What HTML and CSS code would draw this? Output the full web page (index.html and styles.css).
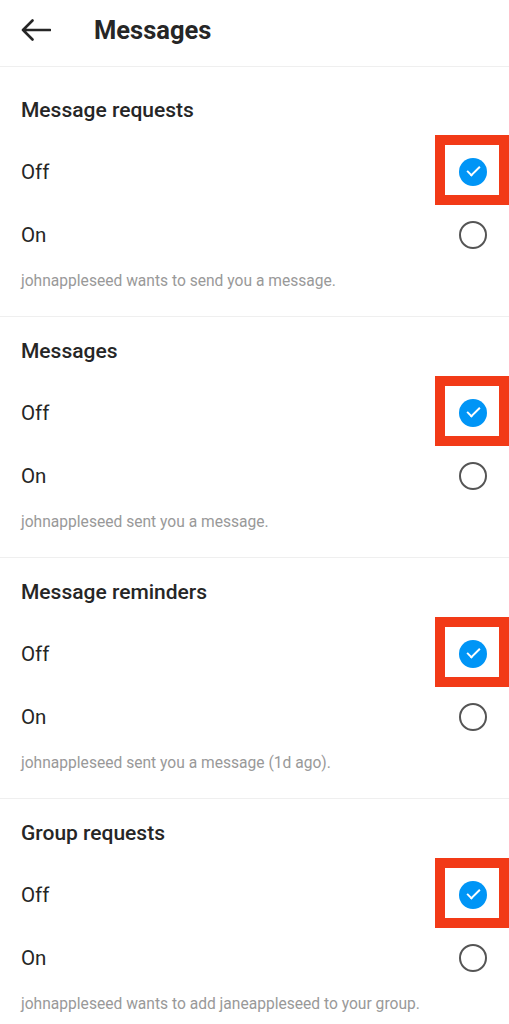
FILE: index.html
```html
<!DOCTYPE html>
<html lang="en">
<head>
    <meta charset="UTF-8">
    <meta name="viewport" content="width=device-width, initial-scale=1.0">
    <title>Messages</title>
    <link rel="stylesheet" href="styles.css">
</head>
<body>
    <div class="header">
        <svg class="back" width="30" height="22" viewBox="0 0 30 22">
            <path d="M29 11H2M11.5 1.5L2 11l9.5 9.5" fill="none" stroke="#262626" stroke-width="2.6" stroke-linecap="round" stroke-linejoin="round"/>
        </svg>
        <h1>Messages</h1>
    </div>

    <div class="section first">
        <h2>Message requests</h2>
        <div class="option">
            <span>Off</span>
            <span class="radio checked marked"></span>
        </div>
        <div class="option">
            <span>On</span>
            <span class="radio"></span>
        </div>
        <p class="note">johnappleseed wants to send you a message.</p>
    </div>

    <div class="section">
        <h2>Messages</h2>
        <div class="option">
            <span>Off</span>
            <span class="radio checked marked"></span>
        </div>
        <div class="option">
            <span>On</span>
            <span class="radio"></span>
        </div>
        <p class="note">johnappleseed sent you a message.</p>
    </div>

    <div class="section">
        <h2>Message reminders</h2>
        <div class="option">
            <span>Off</span>
            <span class="radio checked marked"></span>
        </div>
        <div class="option">
            <span>On</span>
            <span class="radio"></span>
        </div>
        <p class="note">johnappleseed sent you a message (1d ago).</p>
    </div>

    <div class="section">
        <h2>Group requests</h2>
        <div class="option">
            <span>Off</span>
            <span class="radio checked marked"></span>
        </div>
        <div class="option">
            <span>On</span>
            <span class="radio"></span>
        </div>
        <p class="note">johnappleseed wants to add janeappleseed to your group.</p>
    </div>
</body>
</html>
```

FILE: styles.css
```css
body {
    font-family: Roboto, "Noto Sans", sans-serif;
    margin: 0;
    background-color: #fff;
    color: #262626;
}
.header {
    height: 66px;
    display: flex;
    align-items: center;
    padding-left: 21px;
    border-bottom: 1px solid #efefef;
    box-sizing: content-box;
}
.header .back {
    display: block;
    margin-top: -6px;
}
.header h1 {
    margin: -6px 0 0 43px;
    font-size: 25.5px;
    font-weight: 700;
    line-height: 28px;
}
.section {
    padding: 22px 22px 26px 21px;
    border-bottom: 1px solid #efefef;
}
.section.first {
    padding-top: 31px;
}
.section h2 {
    margin: 0 0 18px 0;
    font-size: 21px;
    font-weight: 500;
    line-height: 24px;
}
.option {
    height: 63px;
    display: flex;
    align-items: center;
    justify-content: space-between;
    font-size: 20.5px;
    line-height: 24px;
}
.radio {
    position: relative;
    width: 28px;
    height: 28px;
    border-radius: 50%;
    border: 2.5px solid #555;
    box-sizing: border-box;
}
.radio.checked {
    border: none;
    background-color: #0095f6;
}
/* check mark */
.radio.checked::before {
    content: "";
    position: absolute;
    left: 8px;
    top: 8px;
    width: 11px;
    height: 5px;
    border-left: 2.5px solid #fff;
    border-bottom: 2.5px solid #fff;
    transform: rotate(-45deg);
}
/* red annotation box */
.radio.marked::after {
    content: "";
    position: absolute;
    top: -23px;
    bottom: -19px;
    left: -24px;
    right: -22px;
    border: 10px solid #f23a17;
}
.note {
    margin: 6px 0 0 0;
    font-size: 15.6px;
    line-height: 18px;
    color: #999;
}
```
